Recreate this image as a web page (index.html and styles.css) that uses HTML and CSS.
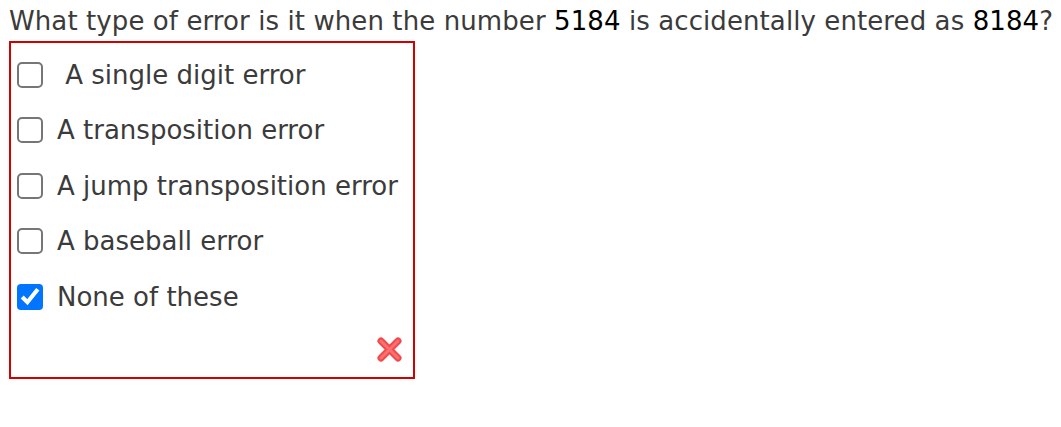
FILE: index.html
```html
<!DOCTYPE html>
<html>
<head>
<meta charset="utf-8">
<link rel="stylesheet" href="styles.css">
</head>
<body>
<div class="question">What type of error is it when the number <span class="num">5184</span> is accidentally entered as <span class="num">8184</span>?</div>
<div class="answers">
  <label class="option"><input type="checkbox"><span class="label">&nbsp;A single digit error</span></label>
  <label class="option"><input type="checkbox"><span class="label">A transposition error</span></label>
  <label class="option"><input type="checkbox"><span class="label">A jump transposition error</span></label>
  <label class="option"><input type="checkbox"><span class="label">A baseball error</span></label>
  <label class="option"><input type="checkbox" checked><span class="label">None of these</span></label>
  <div class="mark">
    <svg width="27" height="27" viewBox="0 0 27 27">
      <g stroke-linecap="round">
        <path d="M5 5 L22 22 M22 5 L5 22" stroke="#f04a4a" stroke-width="7"/>
        <path d="M5 5 L22 22 M22 5 L5 22" stroke="#fa7070" stroke-width="3"/>
      </g>
    </svg>
  </div>
</div>
</body>
</html>
```
FILE: styles.css
```css
body {
  margin: 0;
  padding: 6px 9px;
  font-family: "DejaVu Sans", Verdana, sans-serif;
  font-size: 26px;
  color: #3b3b3b;
  background: #fff;
}
.question {
  line-height: 30px;
  margin-bottom: 5px;
  letter-spacing: 0.09px;
  white-space: nowrap;
}
.num { color: #000; }
.answers {
  width: 396px;
  border: 2px solid #d40000;
  padding: 4px 0 14px 6px;
  display: flex;
  flex-direction: column;
}
.option {
  display: flex;
  align-items: center;
  height: 55.5px;
  gap: 14px;
}
.option input {
  zoom: 2;
  margin: 0;
  flex: none;
}
.mark {
  display: flex;
  justify-content: flex-end;
  padding-right: 10px;
  padding-top: 11px;
  height: 27px;
}
```
